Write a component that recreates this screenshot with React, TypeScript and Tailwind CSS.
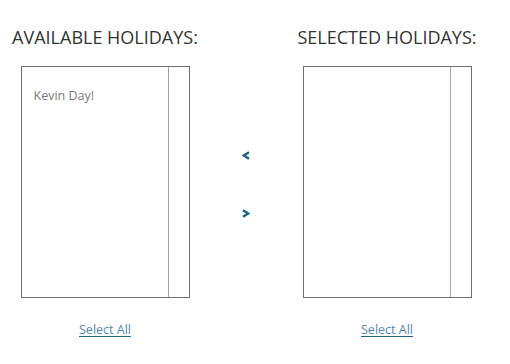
import * as React from 'react';

function ListBox({ items }: { items: string[] }) {
  return (
    <div className="flex h-[232px] w-[169px] border border-[#6e6e6e] bg-white">
      <div className="flex-1 px-3 pt-[21px]">
        {items.map((item) => (
          <div key={item} className="text-[12.5px] leading-[16px] text-[#7a7a7a]">
            {item}
          </div>
        ))}
      </div>
      <div className="w-[21px] border-l border-[#9aa6b2]" />
    </div>
  );
}

function Column({ title, items }: { title: string; items: string[] }) {
  return (
    <div className="flex flex-col items-center">
      <h2 className="text-[18px] leading-[24px] font-normal text-[#333333] whitespace-nowrap">{title}</h2>
      <div className="mt-[17px]">
        <ListBox items={items} />
      </div>
      <a href="#" className="mt-[24px] text-[12.5px] leading-[16px] text-[#5089b0] underline decoration-[#1f6483] underline-offset-2">
        Select All
      </a>
    </div>
  );
}

export default function App() {
  return (
    <div className="flex h-[364px] w-[510px] bg-white pt-[25px]" style={{ fontFamily: '"Open Sans", sans-serif' }}>
      <div className="w-[210px]">
        <Column title="AVAILABLE HOLIDAYS:" items={['Kevin Day!']} />
      </div>
      <div className="flex w-[72px] flex-col items-center pt-[120px] text-[#1b628d]">
        <button className="flex h-[20px] w-[20px] items-center justify-center">
          <svg width="8" height="9" viewBox="0 0 8 9" fill="none" stroke="currentColor" strokeWidth="2.4">
            <path d="M7 1.2 L1.8 4.5 L7 7.8" />
          </svg>
        </button>
        <button className="mt-[38px] flex h-[20px] w-[20px] items-center justify-center">
          <svg width="8" height="9" viewBox="0 0 8 9" fill="none" stroke="currentColor" strokeWidth="2.4">
            <path d="M1 1.2 L6.2 4.5 L1 7.8" />
          </svg>
        </button>
      </div>
      <div className="w-[210px]">
        <Column title="SELECTED HOLIDAYS:" items={[]} />
      </div>
    </div>
  );
}
